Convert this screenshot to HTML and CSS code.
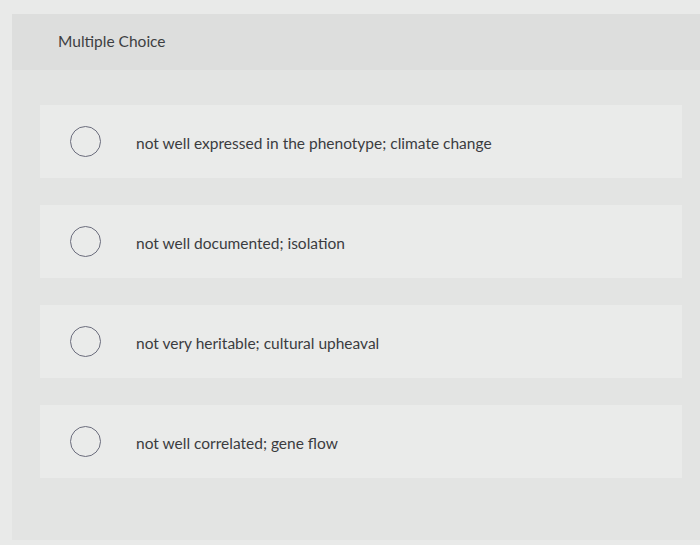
FILE: index.html
```html
<!DOCTYPE html>
<html>
<head>
<meta charset="utf-8">
<link rel="stylesheet" href="styles.css">
</head>
<body>
<div class="panel">
  <div class="header">Multiple Choice</div>
  <div class="options">
    <div class="option"><span class="radio"></span><span class="label">not well expressed in the phenotype; climate change</span></div>
    <div class="option"><span class="radio"></span><span class="label">not well documented; isolation</span></div>
    <div class="option"><span class="radio"></span><span class="label">not very heritable; cultural upheaval</span></div>
    <div class="option"><span class="radio"></span><span class="label">not well correlated; gene flow</span></div>
  </div>
</div>
</body>
</html>
```

FILE: styles.css
```css
html, body {
  margin: 0;
  padding: 0;
}
body {
  width: 700px;
  height: 545px;
  overflow: hidden;
  background: #e9eae9;
  font-family: "Lato", "Open Sans", sans-serif;
  color: #3b3c3f;
}
.panel {
  margin: 14px 0 0 12px;
  height: 526px;
  background: #e3e4e3;
}
.header {
  height: 56px;
  box-sizing: border-box;
  padding: 18px 0 0 46px;
  font-size: 15.5px;
  background: #dddedd;
  color: #3d3e42;
}
.options {
  display: flex;
  flex-direction: column;
  gap: 27px;
  padding: 35px 18px 0 28px;
}
.option {
  height: 73px;
  background: #eaebea;
  display: flex;
  align-items: center;
  padding-left: 30px;
}
.radio {
  width: 29px;
  height: 29px;
  border: 1.5px solid #6a6c7c;
  border-radius: 50%;
  flex: none;
}
.label {
  margin-left: 35px;
  font-size: 15.5px;
  position: relative;
  top: 1px;
}
```
